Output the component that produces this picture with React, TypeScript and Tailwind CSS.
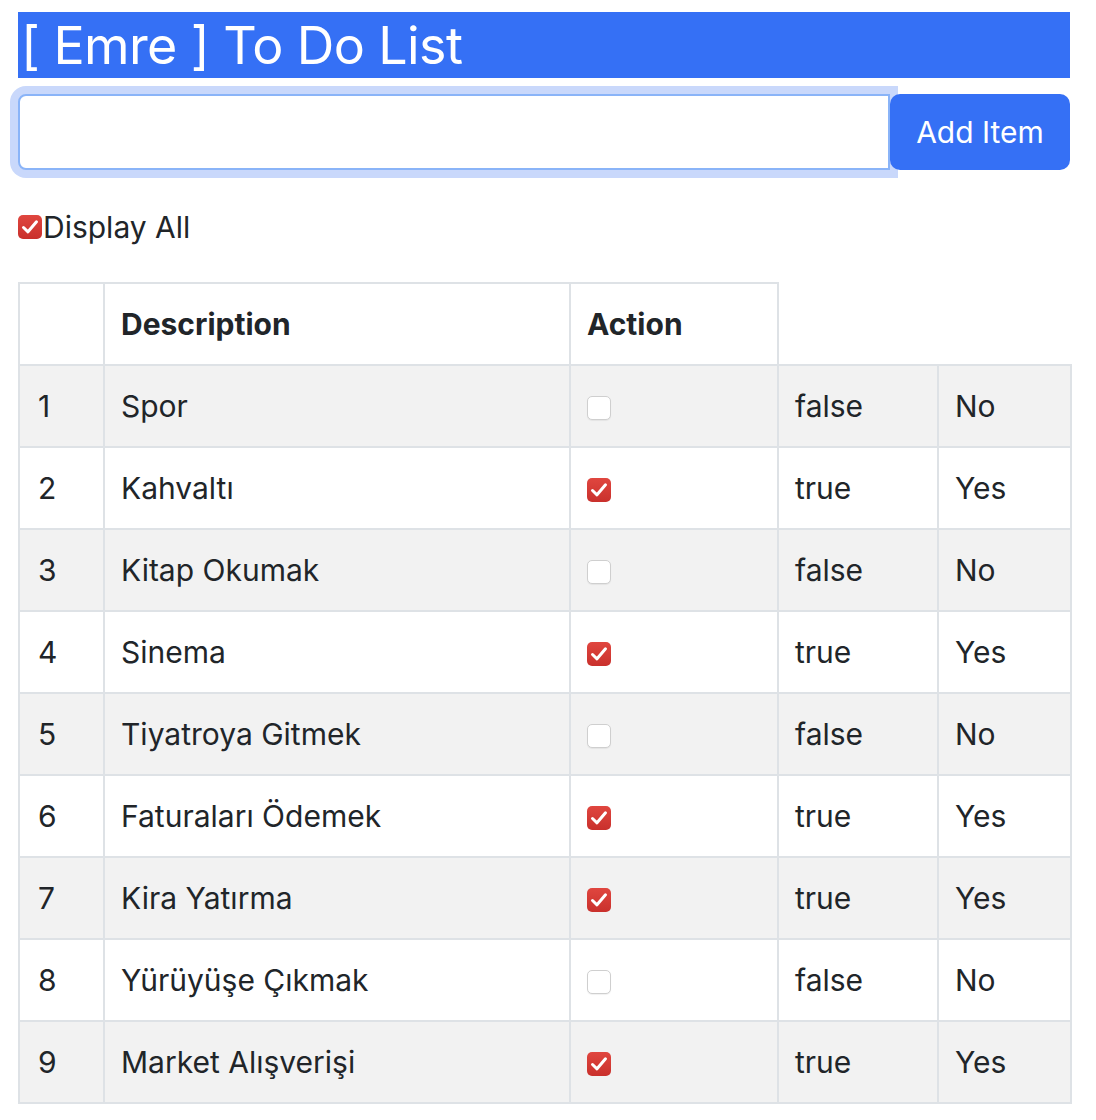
import React from "react";

type Item = { id: number; description: string; done: boolean };

const items: Item[] = [
  { id: 1, description: "Spor", done: false },
  { id: 2, description: "Kahvaltı", done: true },
  { id: 3, description: "Kitap Okumak", done: false },
  { id: 4, description: "Sinema", done: true },
  { id: 5, description: "Tiyatroya Gitmek", done: false },
  { id: 6, description: "Faturaları Ödemek", done: true },
  { id: 7, description: "Kira Yatırma", done: true },
  { id: 8, description: "Yürüyüşe Çıkmak", done: false },
  { id: 9, description: "Market Alışverişi", done: true },
];

const Check: React.FC<{ checked: boolean }> = ({ checked }) =>
  checked ? (
    <span className="inline-flex w-[24px] h-[24px] items-center justify-center rounded-[5px] bg-gradient-to-b from-[#e0463f] to-[#c9302c]">
      <svg width="24" height="24" viewBox="0 0 24 24" fill="none">
        <path
          d="M5.5 12.5 L10 16.8 L18.5 6.8"
          stroke="white"
          strokeWidth="3"
          strokeLinecap="round"
          strokeLinejoin="round"
        />
      </svg>
    </span>
  ) : (
    <span className="inline-block w-[24px] h-[24px] rounded-[5px] border border-[#cfcfcf] bg-white shadow-[0_1px_1px_rgba(0,0,0,0.06)]" />
  );

const App: React.FC = () => {
  return (
    <div
      className="min-h-screen bg-white text-[#212529]"
      style={{ fontFamily: "Inter, 'Liberation Sans', sans-serif" }}
    >
      <div className="ml-[18px] w-[1052px] pt-[12px]">
        <h1 className="h-[66px] bg-[#3570f5] text-white text-[52px] leading-[68px] pl-[3px] font-normal tracking-[-0.6px]">
          [ Emre ] To Do List
        </h1>

        <div className="mt-[16px] flex h-[76px]">
          <input
            className="flex-1 h-full border-2 border-[#8ab4f8] rounded-l-[8px] bg-white shadow-[0_0_0_8px_#c9d8fb] outline-none"
            aria-label="New item"
          />
          <button className="w-[180px] h-full bg-[#3570f5] text-white text-[30px] rounded-[10px]">
            Add Item
          </button>
        </div>

        <div className="mt-[35px] flex items-center h-[44px] text-[30px]">
          <Check checked={true} />
          <span className="ml-[1px]">Display All</span>
        </div>

        <table className="mt-[33px] w-[1052px] border-collapse text-[30px] table-fixed">
          <colgroup>
            <col className="w-[85px]" />
            <col className="w-[466px]" />
            <col className="w-[208px]" />
            <col className="w-[160px]" />
            <col className="w-[133px]" />
          </colgroup>
          <thead>
            <tr className="h-[82px]">
              <th className="border-2 border-[#dee2e6]" />
              <th className="border-2 border-[#dee2e6] text-left font-bold px-[16px]">Description</th>
              <th className="border-2 border-[#dee2e6] text-left font-bold px-[16px]">Action</th>
            </tr>
          </thead>
          <tbody>
            {items.map((item) => (
              <tr key={item.id} className={`h-[82px] ${item.id % 2 === 1 ? "bg-[#f2f2f2]" : "bg-white"}`}>
                <td className="border-2 border-[#dee2e6] px-[18px]">{item.id}</td>
                <td className="border-2 border-[#dee2e6] px-[16px]">{item.description}</td>
                <td className="border-2 border-[#dee2e6] px-[16px] pt-[6px]">
                  <Check checked={item.done} />
                </td>
                <td className="border-2 border-[#dee2e6] px-[16px]">{item.done ? "true" : "false"}</td>
                <td className="border-2 border-[#dee2e6] px-[16px]">{item.done ? "Yes" : "No"}</td>
              </tr>
            ))}
          </tbody>
        </table>
      </div>
    </div>
  );
};

export default App;
